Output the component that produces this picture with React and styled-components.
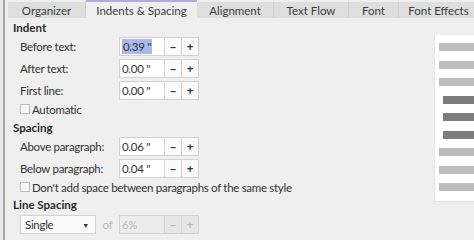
import React from "react";
import styled, { createGlobalStyle } from "styled-components";

const Global = createGlobalStyle`
  html, body { margin: 0; padding: 0; background: #efefef; }
  body { font-family: Lato, "Noto Sans", sans-serif; font-size: 11.5px; letter-spacing: -0.3px; color: #333; }
`;

const Frame = styled.div`
  width: 474px;
  height: 240px;
  box-sizing: border-box;
  padding-left: 3px;
  background: #e9e9e9;
  overflow: hidden;
`;

const Window = styled.div`
  height: 100%;
  border-left: 2px solid #a5a5a5;
  background: #efefef;
  display: flex;
  flex-direction: column;
`;

const TabBar = styled.div`
  display: flex;
  height: 18px;
  padding-left: 3px;
  align-items: stretch;
`;

const Tab = styled.div`
  width: ${(p) => p.w}px;
  flex: none;
  box-sizing: border-box;
  display: flex;
  align-items: center;
  justify-content: center;
  white-space: nowrap;
  letter-spacing: 0;
  color: #3c3c3c;
  background: ${(p) => (p.active ? "#efefef" : "#dedede")};
  border-top: ${(p) => (p.active ? "2px solid #b3a7e6" : "2px solid #efefef")};
  border-right: ${(p) => (p.active ? "none" : "1px solid #d0d0d0")};
`;

const Body = styled.div`
  flex: 1;
  display: flex;
`;

const Form = styled.div`
  flex: 1;
  padding-left: 8px;
  display: flex;
  flex-direction: column;
`;

const Title = styled.div`
  font-weight: 700;
  height: 18px;
  line-height: 18px;
  letter-spacing: 0;
  margin-top: ${(p) => p.mt}px;
  color: #2a2a2a;
`;

const Row = styled.div`
  display: grid;
  grid-template-columns: 99px auto;
  align-items: center;
  padding-left: 7px;
  height: 19px;
  margin-top: ${(p) => p.mt}px;
`;

const Label = styled.span`
  white-space: nowrap;
`;

const Spin = styled.div`
  display: flex;
  height: 19px;
`;

const Field = styled.div`
  width: 46px;
  box-sizing: border-box;
  background: ${(p) => (p.disabled ? "#ececec" : "#fff")};
  border: 1px solid #d2d2d2;
  display: flex;
  align-items: center;
  padding-left: 2px;
  color: ${(p) => (p.disabled ? "#b9b9b9" : "#333")};
`;

const Sel = styled.span`
  background: #a8b9ea;
  padding: 0 1px;
  line-height: 15px;
`;

const Btn = styled.div`
  width: 17px;
  box-sizing: border-box;
  background: ${(p) => (p.disabled ? "#e6e6e6" : "#fafafa")};
  border: 1px solid #d2d2d2;
  border-left: none;
  display: flex;
  align-items: center;
  justify-content: center;
  font-weight: 700;
  color: ${(p) => (p.disabled ? "#bdbdbd" : "#333")};
`;

const CheckRow = styled.div`
  display: flex;
  align-items: center;
  gap: 2px;
  padding-left: 7px;
  height: 18px;
  margin-top: ${(p) => p.mt}px;
  white-space: nowrap;
`;

const Box = styled.span`
  width: 8px;
  height: 8px;
  border: 1px solid #bdbdbd;
  background: #f7f7f7;
  flex: none;
`;

const LineRow = styled.div`
  display: flex;
  align-items: center;
  padding-left: 7px;
  height: 19px;
  margin-top: ${(p) => p.mt}px;
`;

const Select = styled.div`
  width: 76px;
  height: 19px;
  box-sizing: border-box;
  background: #fafafa;
  border: 1px solid #d2d2d2;
  display: flex;
  align-items: center;
  justify-content: space-between;
  padding: 0 6px 0 4px;
`;

const Caret = styled.span`
  font-size: 7px;
  color: #333;
`;

const Of = styled.span`
  color: #b6b6b6;
  width: 23px;
  text-align: center;
`;

const Preview = styled.div`
  width: 40px;
  margin-top: 17px;
  height: 167px;
  background: #fff;
  border-left: 1px solid #e4e4e4;
  border-bottom: 1px solid #e4e4e4;
  display: flex;
  flex-direction: column;
  padding-top: 8px;
  box-sizing: border-box;
  gap: 9.5px;
`;

const Bar = styled.div`
  height: 8px;
  margin-left: ${(p) => (p.dark ? 8 : 4)}px;
  background: ${(p) => (p.dark ? "#7d7d7d" : "#bdbdbd")};
`;

const tabs = [
  ["Organizer", 78],
  ["Indents & Spacing", 111, true],
  ["Alignment", 77],
  ["Text Flow", 75],
  ["Font", 50],
  ["Font Effects", 80],
];

function SpinBox({ value, selected, disabled }) {
  return (
    <Spin>
      <Field disabled={disabled}>{selected ? <Sel>{value}</Sel> : value}</Field>
      <Btn disabled={disabled}>−</Btn>
      <Btn disabled={disabled}>+</Btn>
    </Spin>
  );
}

export default function App() {
  return (
    <>
      <Global />
      <Frame>
        <Window>
          <TabBar>
            {tabs.map(([t, w, a]) => (
              <Tab key={t} w={w} active={a}>
                {t}
              </Tab>
            ))}
          </TabBar>
          <Body>
            <Form>
              <Title mt={1}>Indent</Title>
              <Row mt={0}>
                <Label>Before text:</Label>
                <SpinBox value='0.39 "' selected />
              </Row>
              <Row mt={3}>
                <Label>After text:</Label>
                <SpinBox value='0.00 "' />
              </Row>
              <Row mt={3}>
                <Label>First line:</Label>
                <SpinBox value='0.00 "' />
              </Row>
              <CheckRow mt={0}>
                <Box />
                Automatic
              </CheckRow>
              <Title mt={1}>Spacing</Title>
              <Row mt={0}>
                <Label>Above paragraph:</Label>
                <SpinBox value='0.06 "' />
              </Row>
              <Row mt={3}>
                <Label>Below paragraph:</Label>
                <SpinBox value='0.04 "' />
              </Row>
              <CheckRow mt={0}>
                <Box />
                Don't add space between paragraphs of the same style
              </CheckRow>
              <Title mt={0}>Line Spacing</Title>
              <LineRow mt={1}>
                <Select>
                  Single
                  <Caret>▼</Caret>
                </Select>
                <Of>of</Of>
                <SpinBox value="6%" disabled />
              </LineRow>
            </Form>
            <Preview>
              <Bar />
              <Bar />
              <Bar />
              <Bar dark />
              <Bar dark />
              <Bar dark />
              <Bar />
              <Bar />
              <Bar />
            </Preview>
          </Body>
        </Window>
      </Frame>
    </>
  );
}
